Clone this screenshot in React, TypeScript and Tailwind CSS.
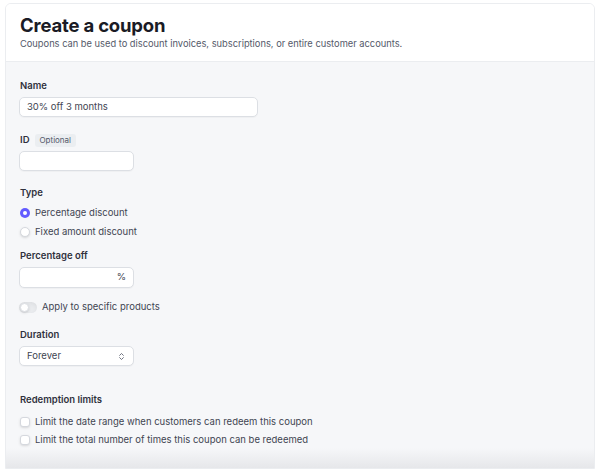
import { ChevronsUpDown } from "lucide-react";

function Label({ children }: { children: React.ReactNode }) {
  return <div className="text-[9.5px] font-semibold text-[#30313d] leading-[12px]">{children}</div>;
}

function Radio({ checked, label }: { checked?: boolean; label: string }) {
  return (
    <div className="flex items-center gap-[5px] h-[12px]">
      {checked ? (
        <span className="h-[10px] w-[10px] rounded-full bg-[#635bff] flex items-center justify-center">
          <span className="h-[4px] w-[4px] rounded-full bg-white" />
        </span>
      ) : (
        <span className="h-[10px] w-[10px] rounded-full bg-white border border-[#d5d8de] shadow-sm" />
      )}
      <span className="text-[9.5px] text-[#414552] leading-[12px]">{label}</span>
    </div>
  );
}

function Checkbox({ label }: { label: string }) {
  return (
    <div className="flex items-center gap-[5px] h-[12px]">
      <span className="h-[10px] w-[10px] rounded-[3px] bg-white border border-[#d5d8de] shadow-sm" />
      <span className="text-[9.5px] text-[#414552] leading-[12px]">{label}</span>
    </div>
  );
}

const input =
  "h-[20px] bg-white border border-[#dcdfe4] rounded-[5px] shadow-[0_1px_1px_rgba(0,0,0,0.03)] flex items-center px-[7px] text-[9.5px] text-[#414552]";

export default function App() {
  return (
    <div className="w-full h-[469px] bg-white overflow-hidden px-[5px] pt-[3px] font-['Inter',sans-serif]">
      <div className="h-full border border-[#ebedf0] rounded-t-[6px] overflow-hidden flex flex-col">
        {/* header */}
        <div className="bg-white border-b border-[#ebedf0] px-[14px] pt-[10px] pb-[11px]">
          <h1 className="text-[18.5px] font-bold text-[#1a1b25] leading-[22px] tracking-[-0.01em]">Create a coupon</h1>
          <p className="text-[9.3px] text-[#545969] mt-[2px] leading-[12px]">
            Coupons can be used to discount invoices, subscriptions, or entire customer accounts.
          </p>
        </div>

        {/* body */}
        <div className="flex-1 bg-[#f6f7f9] px-[14px] pt-[18px] flex flex-col">
          <Label>Name</Label>
          <div className={`${input} w-[239px] mt-[5px] -ml-[1px]`}>30% off 3 months</div>

          <div className="flex items-center gap-[5px] mt-[17px] h-[12px]">
            <Label>ID</Label>
            <span className="text-[8px] text-[#545969] bg-[#ebeef1] rounded-[3px] px-[5px] py-[2.5px] leading-none">Optional</span>
          </div>
          <div className={`${input} w-[115px] mt-[5px] -ml-[1px]`} />

          <div className="mt-[16px]">
            <Label>Type</Label>
          </div>
          <div className="mt-[8px] flex flex-col gap-[7px]">
            <Radio checked label="Percentage discount" />
            <Radio label="Fixed amount discount" />
          </div>

          <div className="mt-[12px]">
            <Label>Percentage off</Label>
          </div>
          <div className={`${input} w-[115px] h-[21px] mt-[5px] -ml-[1px] justify-end`}>%</div>

          <div className="flex items-center gap-[5px] mt-[13px] h-[12px]">
            <span className="h-[11px] w-[18px] -ml-[1px] rounded-full bg-[#e9ebee] shadow-inner flex items-center px-[1px]">
              <span className="h-[9px] w-[9px] rounded-full bg-white shadow-sm border border-[#dcdfe4]" />
            </span>
            <span className="text-[9.5px] text-[#414552] leading-[12px]">Apply to specific products</span>
          </div>

          <div className="mt-[16px]">
            <Label>Duration</Label>
          </div>
          <div className={`${input} w-[115px] mt-[5px] -ml-[1px] justify-between`}>
            <span>Forever</span>
            <ChevronsUpDown className="h-[9px] w-[9px] text-[#545969]" strokeWidth={2.2} />
          </div>

          <div className="mt-[28px]">
            <Label>Redemption limits</Label>
          </div>
          <div className="mt-[10px] flex flex-col gap-[6px]">
            <Checkbox label="Limit the date range when customers can redeem this coupon" />
            <Checkbox label="Limit the total number of times this coupon can be redeemed" />
          </div>
          <div className="flex-1" />
          <div className="h-[20px] -mx-[14px] bg-gradient-to-b from-[#f6f7f9] to-[#e6e7ea]" />
        </div>
      </div>
    </div>
  );
}
